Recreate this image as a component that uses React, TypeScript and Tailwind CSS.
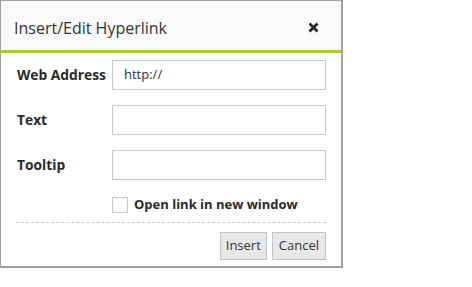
import React from "react";

function Row({ label, value }: { label: string; value?: string }) {
  return (
    <div className="flex items-center">
      <label className="w-[95px] text-[13.8px] font-bold text-[#2a2a2a]">{label}</label>
      <div className="flex h-[30px] w-[214px] items-center border border-[#c8c8c8] bg-white px-[11px] text-[13px] text-[#333]">
        {value}
      </div>
    </div>
  );
}

export default function App() {
  return (
    <div className="h-[287px] w-[472px] bg-white" style={{ fontFamily: '"Open Sans", "Noto Sans", sans-serif' }}>
      <div className="flex h-[268px] w-[343px] flex-col border border-[#a0a0a0] border-r-2 border-b-2 bg-white">
        <div className="flex h-[52px] items-center justify-between border-b-[3px] border-[#a8cb3c] bg-[#fafafa] pl-[13px] pr-[22px] pt-[4px]">
          <span className="text-[16px] text-[#333]">Insert/Edit Hyperlink</span>
          <svg width="11" height="11" viewBox="0 0 11 11">
            <path d="M1.5 1.5 L9.5 9.5 M9.5 1.5 L1.5 9.5" stroke="#222" strokeWidth="2.6" />
          </svg>
        </div>
        <div className="flex flex-col gap-[15px] pl-[16px] pt-[7px]">
          <Row label="Web Address" value="http://" />
          <Row label="Text" />
          <Row label="Tooltip" />
        </div>
        <div className="mt-[15px] flex items-center gap-[6px] pl-[111px]">
          <span className="h-[16px] w-[16px] border border-[#c8c8c8] bg-white" />
          <span className="text-[13px] font-bold text-[#2a2a2a]">Open link in new window</span>
        </div>
        <div className="mx-[15px] mt-[7px] border-t border-dashed border-[#c8c8c8]" />
        <div className="flex justify-end gap-[5px] pr-[15px] pt-[9px]">
          <button className="h-[28px] border border-[#c3c3c3] bg-[#e8e8e8] px-[5px] text-[13px] text-[#333]">Insert</button>
          <button className="h-[28px] border border-[#c3c3c3] bg-[#e8e8e8] px-[6px] text-[13px] text-[#333]">Cancel</button>
        </div>
      </div>
    </div>
  );
}
